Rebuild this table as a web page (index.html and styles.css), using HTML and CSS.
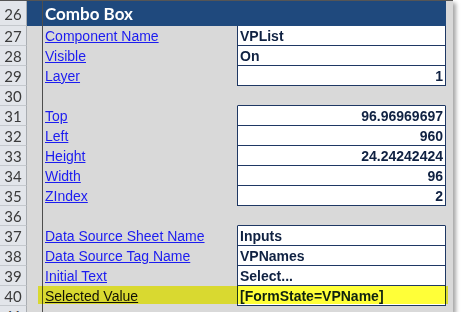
FILE: index.html
```html
<!DOCTYPE html>
<html lang="en">
<head>
    <meta charset="UTF-8">
    <meta name="viewport" content="width=device-width, initial-scale=1.0">
    <title>Combo Box Properties</title>
    <link rel="stylesheet" href="styles.css">
</head>
<body>
    <div class="sheet">
        <!-- Section title -->
        <div class="row head">
            <div class="rh">26</div>
            <div class="col-a"></div>
            <div class="title">Combo Box</div>
        </div>

        <!-- General -->
        <div class="row">
            <div class="rh">27</div>
            <div class="col-a"></div>
            <div class="label"><a href="#">Component Name</a></div>
            <div class="val">VPList</div>
        </div>
        <div class="row">
            <div class="rh">28</div>
            <div class="col-a"></div>
            <div class="label"><a href="#">Visible</a></div>
            <div class="val">On</div>
        </div>
        <div class="row">
            <div class="rh">29</div>
            <div class="col-a"></div>
            <div class="label"><a href="#">Layer</a></div>
            <div class="val num">1</div>
        </div>
        <div class="row">
            <div class="rh">30</div>
            <div class="col-a"></div>
            <div class="label"></div>
            <div class="val cap"></div>
        </div>

        <!-- Position and size -->
        <div class="row">
            <div class="rh">31</div>
            <div class="col-a"></div>
            <div class="label"><a href="#">Top</a></div>
            <div class="val num">96.96969697</div>
        </div>
        <div class="row">
            <div class="rh">32</div>
            <div class="col-a"></div>
            <div class="label"><a href="#">Left</a></div>
            <div class="val num">960</div>
        </div>
        <div class="row">
            <div class="rh">33</div>
            <div class="col-a"></div>
            <div class="label"><a href="#">Height</a></div>
            <div class="val num">24.24242424</div>
        </div>
        <div class="row">
            <div class="rh">34</div>
            <div class="col-a"></div>
            <div class="label"><a href="#">Width</a></div>
            <div class="val num">96</div>
        </div>
        <div class="row">
            <div class="rh">35</div>
            <div class="col-a"></div>
            <div class="label"><a href="#">ZIndex</a></div>
            <div class="val num">2</div>
        </div>
        <div class="row">
            <div class="rh">36</div>
            <div class="col-a"></div>
            <div class="label"></div>
            <div class="val cap"></div>
        </div>

        <!-- Data source -->
        <div class="row">
            <div class="rh">37</div>
            <div class="col-a"></div>
            <div class="label"><a href="#">Data Source Sheet Name</a></div>
            <div class="val">Inputs</div>
        </div>
        <div class="row">
            <div class="rh">38</div>
            <div class="col-a"></div>
            <div class="label"><a href="#">Data Source Tag Name</a></div>
            <div class="val">VPNames</div>
        </div>
        <div class="row">
            <div class="rh">39</div>
            <div class="col-a"></div>
            <div class="label"><a href="#">Initial Text</a></div>
            <div class="val">Select...</div>
        </div>
        <div class="row marked">
            <div class="rh">40</div>
            <div class="col-a"></div>
            <div class="label"><a href="#" class="plain">Selected Value</a></div>
            <div class="val">[FormState=VPName]</div>
            <span class="highlight"></span>
        </div>
        <div class="row">
            <div class="rh">41</div>
            <div class="col-a"></div>
            <div class="label"></div>
            <div class="val blank"></div>
        </div>
    </div>
</body>
</html>
```

FILE: styles.css
```css
body {
    margin: 0;
    background: white;
    font-family: Lato, "Liberation Sans", sans-serif;
}

.sheet {
    width: 453px;
    height: 311px;
    background: #d9d9d9;
    border-top: 1px solid #555;
    box-shadow: 3px 3px 4px rgba(0, 0, 0, 0.35);
    overflow: hidden;
}

/* Spreadsheet rows */
.row {
    display: flex;
    height: 20px;
    position: relative;
}

.row.head {
    height: 25px;
}

.rh {
    width: 26px;
    flex: none;
    background: #e2e5ea;
    border-right: 1px solid #a9adb2;
    border-bottom: 1px solid #c4c8cd;
    color: #3a3a3a;
    font-size: 15px;
    text-align: center;
    line-height: 20px;
}

.head .rh {
    line-height: 26px;
}

.col-a {
    width: 15px;
    flex: none;
    border-right: 1px solid #4d4d4d;
}

.head .col-a {
    background: #1f497d;
}

/* Section title bar */
.title {
    width: 403px;
    background: #1f497d;
    color: white;
    font-weight: bold;
    font-size: 17px;
    line-height: 26px;
    padding-left: 2px;
    box-sizing: border-box;
}

.label {
    width: 194px;
    flex: none;
    padding-left: 2px;
    box-sizing: border-box;
    font-family: "Liberation Sans", Arial, sans-serif;
    font-size: 14px;
    line-height: 21px;
    white-space: nowrap;
}

.label a {
    color: #1c1cf0;
}

.label a.plain {
    color: #111;
}

/* Value boxes */
.val {
    width: 209px;
    flex: none;
    box-sizing: border-box;
    background: white;
    border: 1px solid #1f3864;
    border-top: none;
    padding: 0 2px;
    color: #0f2142;
    font-family: "Liberation Sans", Arial, sans-serif;
    font-weight: bold;
    font-size: 14px;
    line-height: 20px;
    white-space: nowrap;
}

.val.num {
    text-align: right;
}

.val.cap,
.val.blank {
    background: none;
    border-left-color: transparent;
    border-right-color: transparent;
}

.val.blank {
    border-bottom-color: transparent;
}

/* Highlighter stroke across the selected row */
.highlight {
    position: absolute;
    left: 38px;
    top: 0;
    width: 410px;
    height: 18px;
    background: #ffff38;
    mix-blend-mode: multiply;
}
```
